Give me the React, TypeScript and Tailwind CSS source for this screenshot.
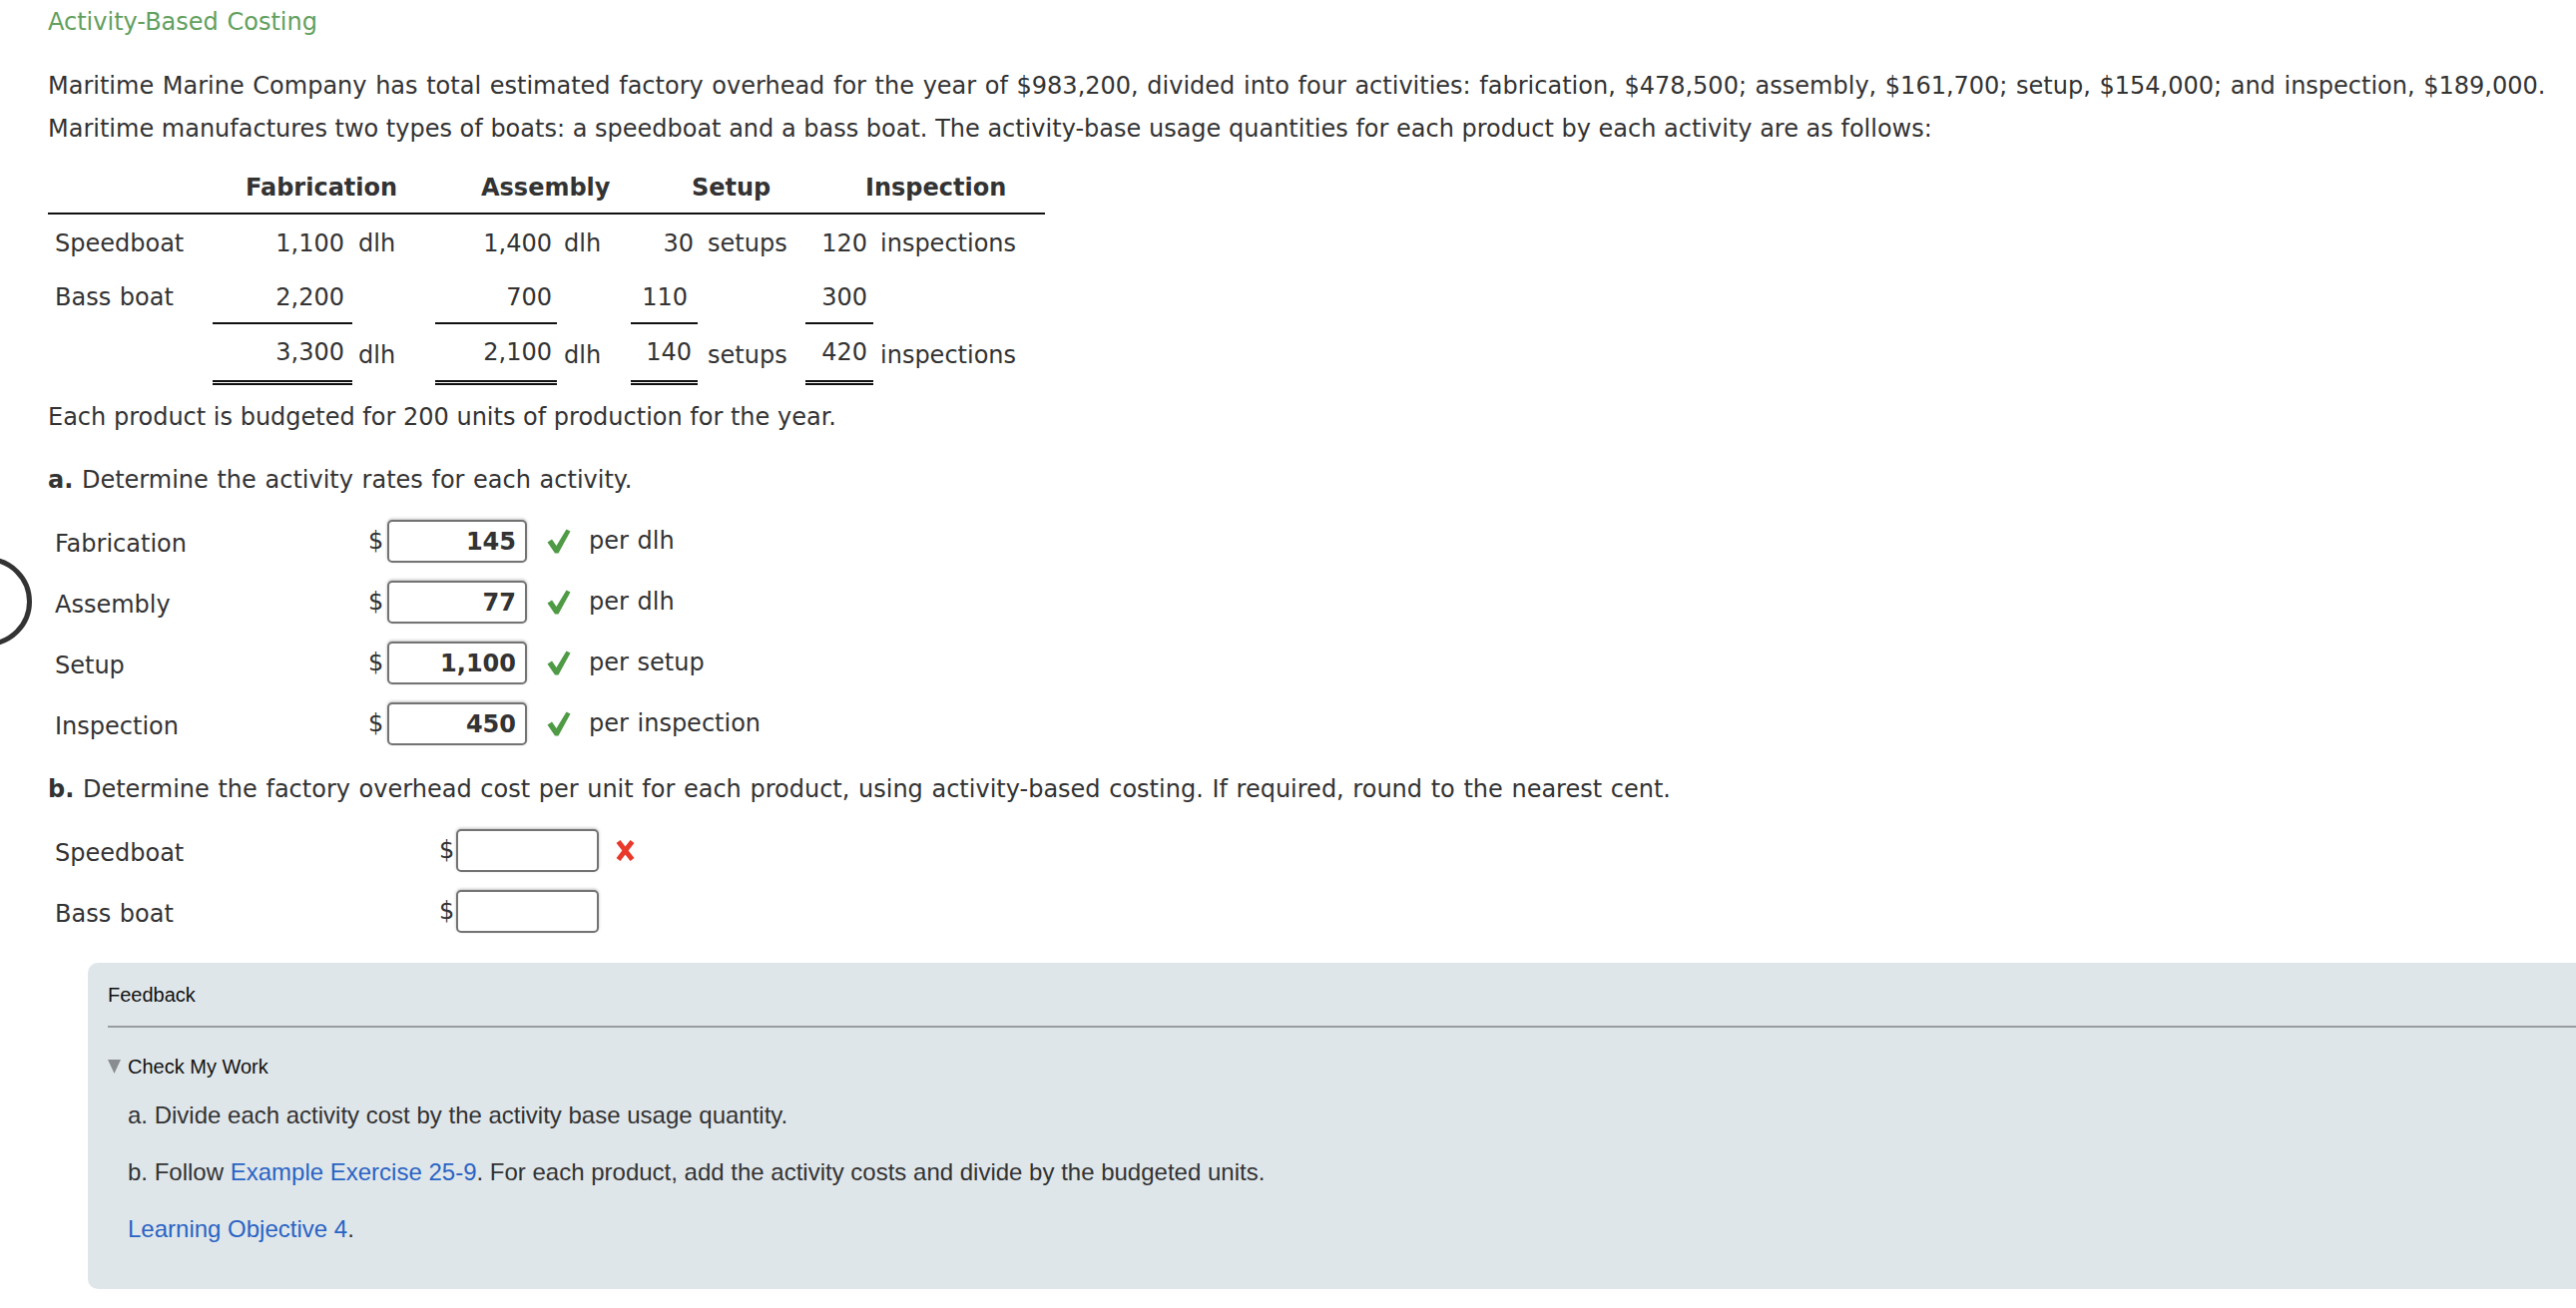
const rows = [
  {
    label: "Speedboat",
    cells: [
      ["1,100", "dlh"],
      ["1,400", "dlh"],
      ["30", "setups"],
      ["120", "inspections"],
    ],
  },
  {
    label: "Bass boat",
    cells: [
      ["2,200", ""],
      ["700", ""],
      ["110", ""],
      ["300", ""],
    ],
  },
];

const totals = [
  ["3,300", "dlh"],
  ["2,100", "dlh"],
  ["140", "setups"],
  ["420", "inspections"],
];

// column widths: num cell, unit cell
const cols = [
  { num: 140, unit: 83, pr: 8, pl: 6, head: "Fabrication", headPl: 33 },
  { num: 122, unit: 74, pr: 5, pl: 7, head: "Assembly", headPl: 46 },
  { num: 67, unit: 108, pr: 4, pl: 10, head: "Setup", headPl: 61 },
  { num: 68, unit: 172, pr: 6, pl: 7, head: "Inspection", headPl: 60 },
];

const rates = [
  { label: "Fabrication", value: "145", unit: "per dlh" },
  { label: "Assembly", value: "77", unit: "per dlh" },
  { label: "Setup", value: "1,100", unit: "per setup" },
  { label: "Inspection", value: "450", unit: "per inspection" },
];

function Check() {
  return (
    <svg width="24" height="25" viewBox="0 0 24 25" className="shrink-0">
      <path d="M0.5 13.5 L5 10.5 L9.5 17 L19.5 0.5 L23.5 2.5 L11.5 24.5 L8 24.5 Z" fill="#4f9a44" />
    </svg>
  );
}

function Cross() {
  return (
    <svg width="19" height="21" viewBox="0 0 19 21" className="shrink-0">
      <path d="M2.5 1.5 L16.5 19.5 M16.5 1.5 L2.5 19.5" stroke="#e8392b" strokeWidth="5" />
    </svg>
  );
}

function AnswerBox({ value, width }: { value?: string; width: number }) {
  return (
    <input
      readOnly
      value={value ?? ""}
      style={{ width }}
      className="h-[43px] rounded-[5px] border-2 border-[#737373] bg-white px-[9px] text-right font-bold leading-[27px] text-[#333] shadow-[0_-1px_3px_rgba(0,0,0,0.25)] outline-none"
    />
  );
}

export default function App() {
  return (
    <div className="relative min-h-[1311px] overflow-hidden bg-white pl-[48px] font-['DejaVu_Sans',Verdana,sans-serif] text-[24px] leading-[43px] text-[#333] [word-spacing:1px]">
      <div className="absolute left-[-58px] top-[558px] h-[90px] w-[90px] rounded-full border-[5px] border-[#333]" />

      <div className="pt-[1px] text-[#62a05e]">Activity-Based Costing</div>

      <div className="mt-[21px] whitespace-nowrap">
        <div>
          Maritime Marine Company has total estimated factory overhead for the year of $983,200, divided into four
          activities: fabrication, $478,500; assembly, $161,700; setup, $154,000; and inspection, $189,000.
        </div>
        <div className="[word-spacing:0px]">
          Maritime manufactures two types of boats: a speedboat and a bass boat. The activity-base usage quantities for
          each product by each activity are as follows:
        </div>
      </div>

      <table className="mt-[18px] table-fixed border-separate border-spacing-0 leading-[27px]">
        <colgroup>
          <col style={{ width: 165 }} />
          {cols.map((c) => [
            <col key={c.head + "n"} style={{ width: c.num }} />,
            <col key={c.head + "u"} style={{ width: c.unit }} />,
          ])}
        </colgroup>
        <thead>
          <tr>
            <th className="border-b-2 border-[#111] pb-[11px] pt-[6px]" />
            {cols.map((c) => (
              <th
                key={c.head}
                colSpan={2}
                style={{ paddingLeft: c.headPl }}
                className="whitespace-nowrap border-b-2 border-[#111] pb-[11px] pt-[6px] text-left align-top font-bold"
              >
                {c.head}
              </th>
            ))}
          </tr>
        </thead>
        <tbody>
          {rows.map((row, ri) => {
            const last = ri === rows.length - 1;
            return (
              <tr key={row.label}>
                <td className="whitespace-nowrap pb-[11px] pl-[7px] pt-[16px] align-top">{row.label}</td>
                {row.cells.map(([n, u], ci) => [
                  <td
                    key={ci + "n"}
                    style={{ paddingRight: row.label === "Bass boat" && ci === 2 ? 10 : cols[ci].pr }}
                    className={`pb-[11px] pt-[16px] text-right align-top ${last ? "border-b-2 border-[#111]" : ""}`}
                  >
                    {n}
                  </td>,
                  <td
                    key={ci + "u"}
                    style={{ paddingLeft: cols[ci].pl }}
                    className="whitespace-nowrap pb-[11px] pt-[16px] align-top"
                  >
                    {u}
                  </td>,
                ])}
              </tr>
            );
          })}
          <tr>
            <td />
            {totals.map(([n, u], ci) => [
              <td
                key={ci + "n"}
                style={{ paddingRight: ci === 2 ? 6 : cols[ci].pr }}
                className="border-b-[5px] border-double border-[#111] pb-[14px] pt-[15px] text-right align-top"
              >
                {n}
              </td>,
              <td
                key={ci + "u"}
                style={{ paddingLeft: cols[ci].pl }}
                className="whitespace-nowrap pt-[18px] align-top"
              >
                {u}
              </td>,
            ])}
          </tr>
        </tbody>
      </table>

      <div className="mt-[11px] [word-spacing:0px]">Each product is budgeted for 200 units of production for the year.</div>

      <div className="mt-[20px]">
        <span className="font-bold">a.</span> Determine the activity rates for each activity.
      </div>

      <div className="mt-[9px]">
        {rates.map((r) => (
          <div key={r.label} className="flex items-center py-[9px] leading-[27px]">
            <div className="w-[321px] pl-[7px] pt-[6px]">{r.label}</div>
            <div className="w-[19px]">$</div>
            <AnswerBox value={r.value} width={140} />
            <div className="ml-[20px] flex items-center">
              <Check />
            </div>
            <div className="ml-[18px]">{r.unit}</div>
          </div>
        ))}
      </div>

      <div className="mt-[14px]">
        <span className="font-bold">b.</span> Determine the factory overhead cost per unit for each product, using
        activity-based costing. If required, round to the nearest cent.
      </div>

      <div className="mt-[9px]">
        {[
          { label: "Speedboat", wrong: true },
          { label: "Bass boat", wrong: false },
        ].map((r) => (
          <div key={r.label} className="flex items-center py-[9px] leading-[27px]">
            <div className="w-[392px] pl-[7px] pt-[6px]">{r.label}</div>
            <div className="w-[17px]">$</div>
            <AnswerBox width={143} />
            {r.wrong && (
              <div className="ml-[17px] flex items-center">
                <Cross />
              </div>
            )}
          </div>
        ))}
      </div>

      <div className="ml-[40px] mt-[21px] rounded-l-[10px] bg-[#dfe6ea] pb-[46px] pl-[20px] pt-[20px] font-['Liberation_Sans',Arial,sans-serif] text-[20px] leading-[24px] text-[#333] [word-spacing:0px]">
        <div className="text-[#111]">Feedback</div>
        <div className="mt-[19px] h-[2px] bg-[#979ca1]" />
        <div className="mt-[27px] flex items-center text-[#111]">
          <svg width="13" height="14" viewBox="0 0 13 14" className="mr-[7px]">
            <path d="M0 0 H13 L6.5 14 Z" fill="#8a8d90" />
          </svg>
          Check My Work
        </div>
        <div className="pl-[20px] text-[24px] leading-[28px]">
          <p className="mt-[23px]">a. Divide each activity cost by the activity base usage quantity.</p>
          <p className="mt-[29px]">
            b. Follow <span className="text-[#2a64c4]">Example Exercise 25-9</span>. For each product, add the activity
            costs and divide by the budgeted units.
          </p>
          <p className="mt-[29px]">
            <span className="text-[#2a64c4]">Learning Objective 4</span>.
          </p>
        </div>
      </div>
    </div>
  );
}
